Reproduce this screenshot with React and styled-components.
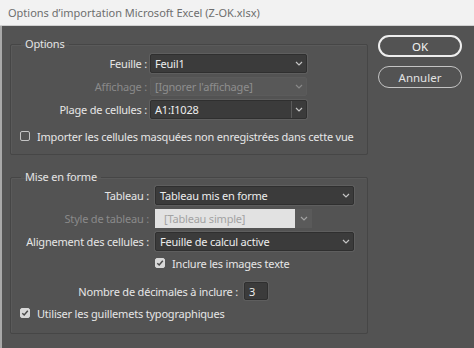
import React from "react";
import styled, { createGlobalStyle } from "styled-components";

const Global = createGlobalStyle`
  html, body, #root { margin: 0; padding: 0; height: 100%; }
  body { background: #535353; font-family: "Noto Sans", "Open Sans", sans-serif; font-size: 11px; }
  * { box-sizing: border-box; }
`;

const Window = styled.div`
  display: flex;
  flex-direction: column;
  height: 100%;
  width: 474px;
  overflow: hidden;
`;

const TitleBar = styled.div`
  height: 26px;
  flex: none;
  display: flex;
  align-items: center;
  padding-left: 8px;
  background: #f2f2f2;
  color: #6e6e6e;
  font-size: 11px;
  border-bottom: 1px solid #d0d0d0;
`;

const Body = styled.div`
  flex: 1;
  display: flex;
  align-items: flex-start;
  gap: 10px;
  padding: 9px 0 0 8px;
  background: #535353;
  border-left: 2px solid #a8a8a8;
  letter-spacing: -0.2px;
`;

const Panels = styled.div`
  width: 358px;
  display: flex;
  flex-direction: column;
  gap: 13px;
`;

const Group = styled.fieldset`
  margin: 0;
  padding: ${(p) => p.$pad};
  min-width: 0;
  border: 1px solid #464646;
  box-shadow: inset 1px 1px 0 #5a5a5a;
  border-radius: 2px;
`;

const Legend = styled.legend`
  margin-left: 10px;
  padding: 0 4px;
  line-height: 18px;
  color: #e4e4e4;
`;

const FormGrid = styled.div`
  display: grid;
  grid-template-columns: ${(p) => p.$label}px auto;
  column-gap: ${(p) => p.$gap}px;
  row-gap: 4px;
  align-items: center;
`;

const Label = styled.span`
  text-align: right;
  white-space: nowrap;
  color: ${(p) => (p.$disabled ? "#8a8a8a" : "#e6e6e6")};
`;

const Select = styled.div`
  display: flex;
  align-items: stretch;
  height: 19px;
  width: ${(p) => p.$width}px;
  background: ${(p) => (p.$disabled ? "#585858" : "#3b3b3b")};
  border: 1px solid ${(p) => (p.$disabled ? "#5b5b5b" : "#2f2f2f")};
  box-shadow: ${(p) => (p.$disabled ? "none" : "0 0 0 1px #5e5e5e")};
  border-radius: 2px;
`;

const SelectValue = styled.span`
  flex: 1;
  display: flex;
  align-items: center;
  padding-left: 4px;
  white-space: nowrap;
  overflow: hidden;
  color: ${(p) => (p.$disabled ? "#8e8e8e" : "#ededed")};
`;

const Arrow = styled.span`
  width: 15px;
  flex: none;
  display: flex;
  align-items: center;
  justify-content: center;
  border-left: ${(p) => (p.$split ? "1px solid #5a5a5a" : "none")};
  opacity: ${(p) => (p.$disabled ? 0.45 : 1)};
`;

const LightCombo = styled.div`
  display: flex;
  height: 19px;
`;

const LightField = styled.span`
  width: 140px;
  display: flex;
  align-items: center;
  padding-left: 9px;
  background: #e2e2e2;
  color: #a2a2a2;
  white-space: nowrap;
`;

const LightArrow = styled.span`
  width: 17px;
  display: flex;
  align-items: center;
  justify-content: center;
  background: #5d5d5d;
  opacity: 0.7;
`;

const CheckRow = styled.label`
  display: flex;
  align-items: center;
  gap: 7px;
  height: 16px;
  color: #e6e6e6;
  white-space: nowrap;
  margin: ${(p) => p.$margin};
`;

const Box = styled.span`
  width: 10px;
  height: 10px;
  flex: none;
  border-radius: 2px;
  display: flex;
  align-items: center;
  justify-content: center;
  background: ${(p) => (p.$checked ? "#d8d8d8" : "transparent")};
  border: 1px solid ${(p) => (p.$checked ? "#d8d8d8" : "#c4c4c4")};
`;

const NumberRow = styled.div`
  display: flex;
  align-items: center;
  gap: 6px;
  margin-top: 11px;
`;

const NumberLabel = styled.span`
  width: 227px;
  text-align: right;
  color: #e6e6e6;
`;

const NumberInput = styled.span`
  width: 24px;
  height: 18px;
  display: flex;
  align-items: center;
  padding-left: 4px;
  background: #3b3b3b;
  border: 1px solid #2f2f2f;
  box-shadow: 0 0 0 1px #5e5e5e;
  border-radius: 2px;
  color: #ededed;
`;

const Buttons = styled.div`
  width: 84px;
  display: flex;
  flex-direction: column;
  gap: 9px;
`;

const Button = styled.button`
  height: 22px;
  border-radius: 11px;
  background: transparent;
  font-family: inherit;
  font-size: 11.5px;
  letter-spacing: 0;
  padding: 0;
  color: ${(p) => (p.$primary ? "#f4f4f4" : "#e2e2e2")};
  border: ${(p) => (p.$primary ? "2px solid #eeeeee" : "1px solid #c4c4c4")};
`;

const Chevron = () => (
  <svg width="8" height="5" viewBox="0 0 8 5">
    <polyline points="1,1 4,4 7,1" fill="none" stroke="#c4c4c4" strokeWidth="1.2" />
  </svg>
);

const Check = () => (
  <svg width="8" height="8" viewBox="0 0 8 8">
    <polyline points="1.3,4.2 3.2,6 6.8,1.8" fill="none" stroke="#4a4a4a" strokeWidth="1.5" />
  </svg>
);

const Dropdown = ({ value, width, disabled, split }) => (
  <Select $width={width} $disabled={disabled}>
    <SelectValue $disabled={disabled}>{value}</SelectValue>
    <Arrow $split={split} $disabled={disabled}>
      <Chevron />
    </Arrow>
  </Select>
);

const CheckBox = ({ checked, children, margin }) => (
  <CheckRow $margin={margin}>
    <Box $checked={checked}>{checked && <Check />}</Box>
    {children}
  </CheckRow>
);

export default function App() {
  return (
    <>
      <Global />
      <Window>
        <TitleBar>Options d’importation Microsoft Excel (Z-OK.xlsx)</TitleBar>
        <Body>
          <Panels>
            <Group $pad="1px 0 10px 0">
              <Legend>Options</Legend>
              <FormGrid $label={136} $gap={3}>
                <Label>Feuille :</Label>
                <Dropdown value="Feuil1" width={157} />
                <Label $disabled>Affichage :</Label>
                <Dropdown value="[Ignorer l'affichage]" width={157} disabled />
                <Label>Plage de cellules :</Label>
                <Dropdown value="A1:I1028" width={157} split />
              </FormGrid>
              <CheckBox margin="9px 0 0 9px">
                Importer les cellules masquées non enregistrées dans cette vue
              </CheckBox>
            </Group>
            <Group $pad="0 0 12px 0">
              <Legend>Mise en forme</Legend>
              <FormGrid $label={138} $gap={6}>
                <Label>Tableau :</Label>
                <Dropdown value="Tableau mis en forme" width={199} />
                <Label $disabled>Style de tableau :</Label>
                <LightCombo>
                  <LightField>[Tableau simple]</LightField>
                  <LightArrow>
                    <Chevron />
                  </LightArrow>
                </LightCombo>
                <Label>Alignement des cellules :</Label>
                <Dropdown value="Feuille de calcul active" width={199} />
              </FormGrid>
              <CheckBox checked margin="4px 0 0 144px">
                Inclure les images texte
              </CheckBox>
              <NumberRow>
                <NumberLabel>Nombre de décimales à inclure :</NumberLabel>
                <NumberInput>3</NumberInput>
              </NumberRow>
              <CheckBox checked margin="5px 0 0 9px">
                Utiliser les guillemets typographiques
              </CheckBox>
            </Group>
          </Panels>
          <Buttons>
            <Button $primary>OK</Button>
            <Button>Annuler</Button>
          </Buttons>
        </Body>
      </Window>
    </>
  );
}
